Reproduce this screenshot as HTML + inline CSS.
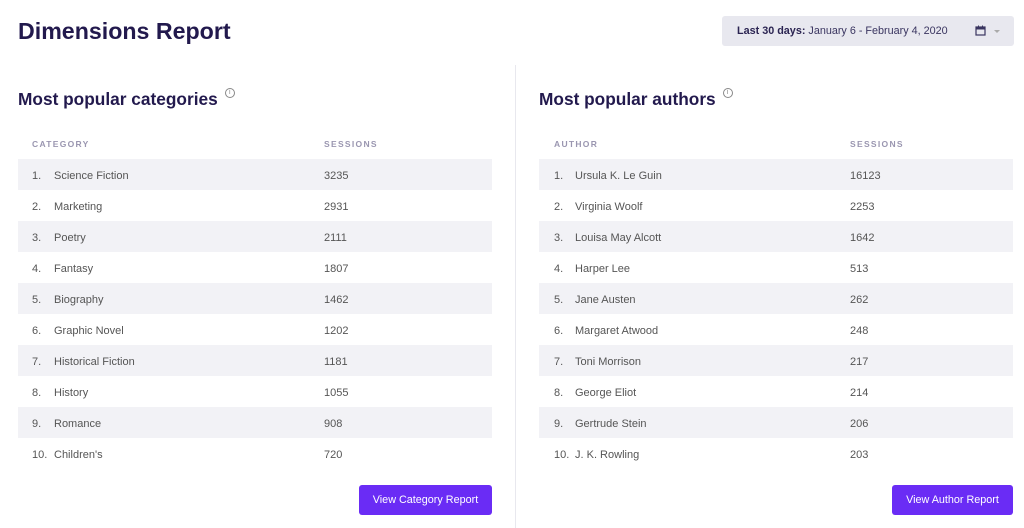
<!DOCTYPE html>
<html><head><style>
*{margin:0;padding:0;box-sizing:border-box}
body{width:1024px;height:528px;background:#fff;font-family:"Liberation Sans",sans-serif;position:relative;overflow:hidden;color:#555}
h1{position:absolute;left:18px;top:18px;font-size:23.2px;font-weight:bold;color:#22194d}
.date{position:absolute;left:722px;top:16px;width:292px;height:30px;background:#e8e8ef;border-radius:3px;font-size:10.8px;color:#3a3560;line-height:30px;padding-left:15px}
.date b{color:#2b2452}
.cal{position:absolute;left:253px;top:9px}
.caret{position:absolute;left:272px;top:14px;width:0;height:0;border-left:3px solid transparent;border-right:3px solid transparent;border-top:3px solid #aaa}
.div{position:absolute;left:515px;top:65px;width:1px;height:463px;background:#e8e8ee}
.panel{position:absolute;top:0;width:474px}
h2{position:absolute;top:89px;font-size:17.3px;font-weight:bold;color:#22194d;white-space:nowrap}
h2 .i{display:inline-block;width:10px;height:10px;border:1px solid #888;border-radius:50%;font-size:7px;color:#888;text-align:center;line-height:8px;vertical-align:top;margin-left:7px;margin-top:-1px;font-weight:normal}
.th{position:absolute;top:139px;font-size:8.5px;font-weight:bold;letter-spacing:1.3px;color:#9a96b0}
.row{position:absolute;left:0;width:474px;height:31px;font-size:11px;line-height:31px;color:#555}
.row.s{background:#f2f2f6}
.row span{position:absolute;top:1.5px}
.btn{position:absolute;top:485px;height:30px;background:#6a2cf5;color:#fff;border-radius:3px;font-size:10.8px;line-height:30px;text-align:center}
</style></head><body>
<h1>Dimensions Report</h1>
<div class="date"><b>Last 30 days:</b> January 6 - February 4, 2020
<svg class="cal" width="11" height="11" viewBox="0 0 11 11"><rect x="1" y="2" width="9" height="8" fill="none" stroke="#3a3560" stroke-width="1.2"/><rect x="1" y="2" width="9" height="2.5" fill="#3a3560"/><rect x="3" y="0.5" width="1" height="2" fill="#3a3560"/><rect x="7" y="0.5" width="1" height="2" fill="#3a3560"/></svg>
<div class="caret"></div></div>
<div class="div"></div>

<div class="panel" style="left:18px">
<h2 style="left:0">Most popular categories<span class="i">i</span></h2>
<div class="th" style="left:14px">CATEGORY</div><div class="th" style="left:306px">SESSIONS</div>
<div class="row s" style="top:159px"><span style="left:14px">1.</span><span style="left:36px">Science Fiction</span><span style="left:306px">3235</span></div>
<div class="row" style="top:190px"><span style="left:14px">2.</span><span style="left:36px">Marketing</span><span style="left:306px">2931</span></div>
<div class="row s" style="top:221px"><span style="left:14px">3.</span><span style="left:36px">Poetry</span><span style="left:306px">2111</span></div>
<div class="row" style="top:252px"><span style="left:14px">4.</span><span style="left:36px">Fantasy</span><span style="left:306px">1807</span></div>
<div class="row s" style="top:283px"><span style="left:14px">5.</span><span style="left:36px">Biography</span><span style="left:306px">1462</span></div>
<div class="row" style="top:314px"><span style="left:14px">6.</span><span style="left:36px">Graphic Novel</span><span style="left:306px">1202</span></div>
<div class="row s" style="top:345px"><span style="left:14px">7.</span><span style="left:36px">Historical Fiction</span><span style="left:306px">1181</span></div>
<div class="row" style="top:376px"><span style="left:14px">8.</span><span style="left:36px">History</span><span style="left:306px">1055</span></div>
<div class="row s" style="top:407px"><span style="left:14px">9.</span><span style="left:36px">Romance</span><span style="left:306px">908</span></div>
<div class="row" style="top:438px"><span style="left:14px">10.</span><span style="left:36px">Children's</span><span style="left:306px">720</span></div>
<div class="btn" style="left:341px;width:133px">View Category Report</div>
</div>

<div class="panel" style="left:539px">
<h2 style="left:0">Most popular authors<span class="i">i</span></h2>
<div class="th" style="left:15px">AUTHOR</div><div class="th" style="left:311px">SESSIONS</div>
<div class="row s" style="top:159px"><span style="left:15px">1.</span><span style="left:36px">Ursula K. Le Guin</span><span style="left:311px">16123</span></div>
<div class="row" style="top:190px"><span style="left:15px">2.</span><span style="left:36px">Virginia Woolf</span><span style="left:311px">2253</span></div>
<div class="row s" style="top:221px"><span style="left:15px">3.</span><span style="left:36px">Louisa May Alcott</span><span style="left:311px">1642</span></div>
<div class="row" style="top:252px"><span style="left:15px">4.</span><span style="left:36px">Harper Lee</span><span style="left:311px">513</span></div>
<div class="row s" style="top:283px"><span style="left:15px">5.</span><span style="left:36px">Jane Austen</span><span style="left:311px">262</span></div>
<div class="row" style="top:314px"><span style="left:15px">6.</span><span style="left:36px">Margaret Atwood</span><span style="left:311px">248</span></div>
<div class="row s" style="top:345px"><span style="left:15px">7.</span><span style="left:36px">Toni Morrison</span><span style="left:311px">217</span></div>
<div class="row" style="top:376px"><span style="left:15px">8.</span><span style="left:36px">George Eliot</span><span style="left:311px">214</span></div>
<div class="row s" style="top:407px"><span style="left:15px">9.</span><span style="left:36px">Gertrude Stein</span><span style="left:311px">206</span></div>
<div class="row" style="top:438px"><span style="left:15px">10.</span><span style="left:36px">J. K. Rowling</span><span style="left:311px">203</span></div>
<div class="btn" style="left:353px;width:121px">View Author Report</div>
</div>
</body></html>
